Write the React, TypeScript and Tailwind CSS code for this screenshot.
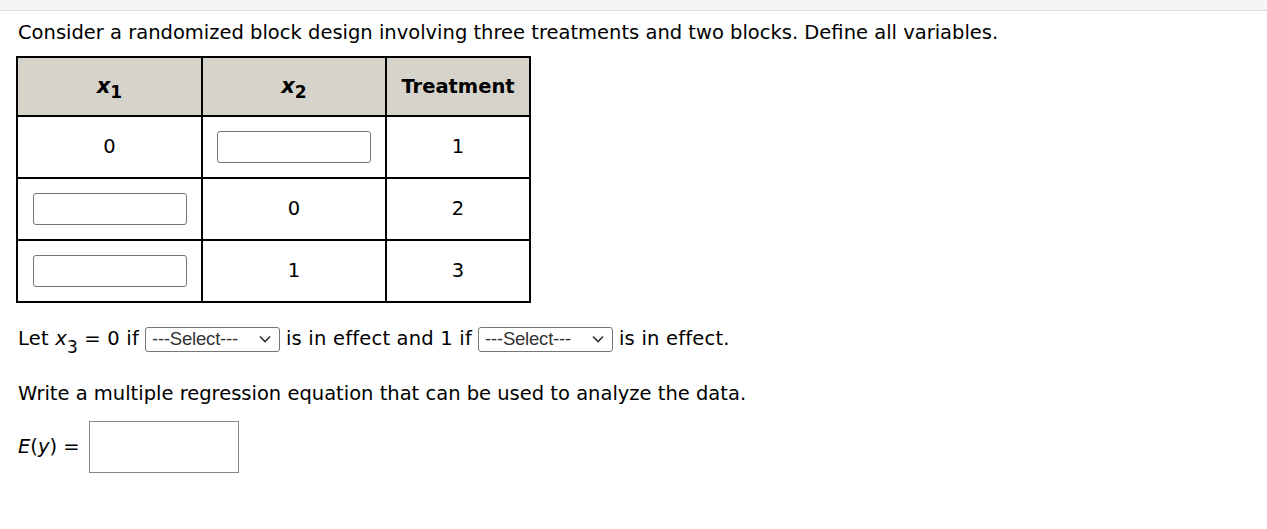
import React from 'react';

const rows = [
  { x1: '0', x2: null, t: '1' },
  { x1: null, x2: '0', t: '2' },
  { x1: null, x2: '1', t: '3' },
];

function Blank() {
  return <div className="mx-auto h-[32px] w-[154px] rounded-[3px] border border-[#767676] bg-white" />;
}

function Select() {
  return (
    <div className="mx-[6px] flex h-[25px] w-[135px] items-center justify-between rounded-[3px] border border-[#767676] bg-white pl-[6px] pr-[8px] font-['Liberation_Sans',sans-serif] text-[18.5px] tracking-[-0.2px] text-[#333]">
      <span>---Select---</span>
      <svg width="12" height="8" viewBox="0 0 12 8" fill="none" stroke="#333" strokeWidth="1.6">
        <path d="M1 1.5l5 5 5-5" />
      </svg>
    </div>
  );
}

export default function App() {
  return (
    <div className="min-h-[529px] bg-white font-['DejaVu_Sans',Verdana,sans-serif] text-[19.5px] text-black">
      <div className="h-[11px] border-b border-[#dcdcdc] bg-[#f5f5f5]" />
      <div className="px-[18px] pt-[9px]">
        <p className="leading-[26px]">
          Consider a randomized block design involving three treatments and two blocks. Define all variables.
        </p>

        <table className="mt-[10px] ml-[-2px] border-collapse">
          <thead>
            <tr className="h-[59px] bg-[#d6d3ca]">
              <th className="w-[185px] border-2 border-black font-bold italic">
                <span className="text-[21px]">x</span>
                <sub className="relative top-[5px] text-[17px] not-italic">1</sub>
              </th>
              <th className="w-[184px] border-2 border-black font-bold italic">
                <span className="text-[21px]">x</span>
                <sub className="relative top-[5px] text-[17px] not-italic">2</sub>
              </th>
              <th className="w-[144px] border-2 border-black font-bold">Treatment</th>
            </tr>
          </thead>
          <tbody>
            {rows.map((r, i) => (
              <tr key={i} className="h-[62px]">
                <td className="border-2 border-black text-center">{r.x1 ?? <Blank />}</td>
                <td className="border-2 border-black text-center">{r.x2 ?? <Blank />}</td>
                <td className="border-2 border-black text-center">{r.t}</td>
              </tr>
            ))}
          </tbody>
        </table>

        <div className="mt-[22px] flex h-[28px] items-center tracking-[0.2px]">
          <span>
            Let <i>x</i>
            <sub className="relative top-[8px] text-[17px]">3</sub> = 0 if
          </span>
          <Select />
          <span>is in effect and 1 if</span>
          <Select />
          <span>is in effect.</span>
        </div>

        <p className="mt-[28px] leading-[26px]">
          Write a multiple regression equation that can be used to analyze the data.
        </p>

        <div className="mt-[14px] flex items-center">
          <span className="w-[71px]">
            <i>E</i>(<i>y</i>) =
          </span>
          <div className="h-[52px] w-[150px] border border-[#888] bg-white" />
        </div>
      </div>
    </div>
  );
}
